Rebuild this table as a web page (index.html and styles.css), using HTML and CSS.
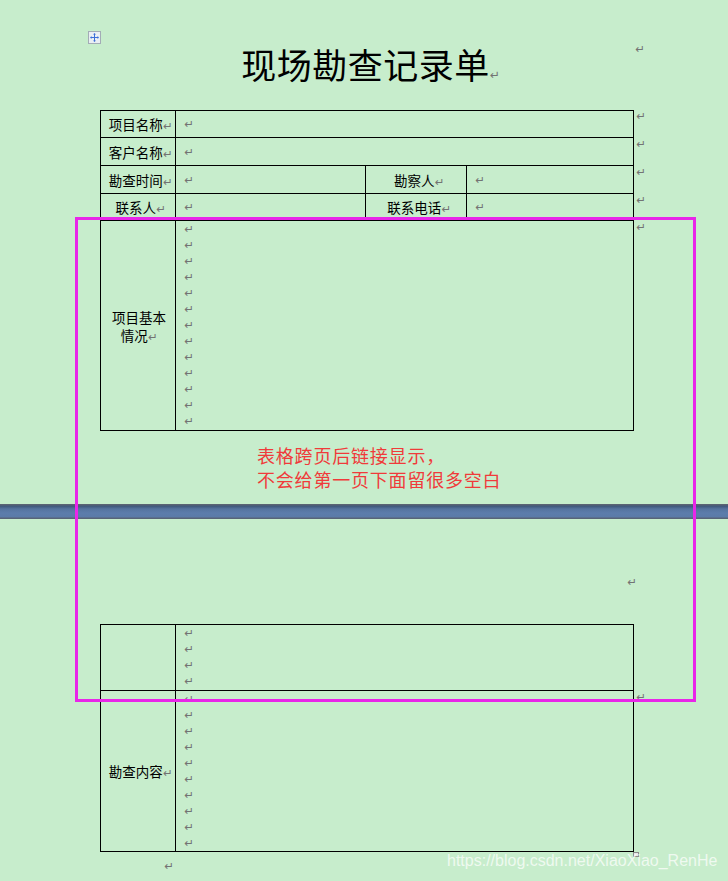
FILE: index.html
```html
<!DOCTYPE html>
<html lang="zh-CN">
<head>
<meta charset="utf-8">
<title>现场勘查记录单</title>
<link rel="stylesheet" href="styles.css">
</head>
<body>
<div class="doc">
  <section class="page page-1">
    <span class="move-handle">
      <svg width="13" height="13" viewBox="0 0 13 13">
        <rect x="0.5" y="0.5" width="12" height="12" fill="#e9eef3" stroke="#a3acb6"/>
        <path d="M6.5 3v7M3 6.5h7" stroke="#3a6fd8" stroke-width="1"/>
        <path d="M6.5 2l-1.5 1.5h3zM6.5 11l-1.5-1.5h3zM2 6.5l1.5-1.5v3zM11 6.5l-1.5-1.5v3z" fill="#3a6fd8"/>
      </svg>
    </span>
    <div class="title-row">
      <h1 class="title">现场勘查记录单<span class="pm">↵</span></h1>
      <span class="pm end">↵</span>
    </div>
    <div class="grid grid-1">
      <div class="c lab top left"><span class="t">项目名称<span class="pm">↵</span></span></div>
      <div class="c val top span3"><span class="pm">↵</span></div>
      <div class="end-cell"><span class="pm">↵</span></div>

      <div class="c lab left"><span class="t">客户名称<span class="pm">↵</span></span></div>
      <div class="c val span3"><span class="pm">↵</span></div>
      <div class="end-cell"><span class="pm">↵</span></div>

      <div class="c lab left"><span class="t">勘查时间<span class="pm">↵</span></span></div>
      <div class="c val"><span class="pm">↵</span></div>
      <div class="c lab lab2"><span class="t">勘察人<span class="pm">↵</span></span></div>
      <div class="c val"><span class="pm">↵</span></div>
      <div class="end-cell"><span class="pm">↵</span></div>

      <div class="c lab left"><span class="t">联系人<span class="pm">↵</span></span></div>
      <div class="c val"><span class="pm">↵</span></div>
      <div class="c lab lab2"><span class="t">联系电话<span class="pm">↵</span></span></div>
      <div class="c val"><span class="pm">↵</span></div>
      <div class="end-cell"><span class="pm">↵</span></div>

      <div class="c lab left multi"><span class="t"><span class="ln">项目基本</span><span class="ln">情况<span class="pm">↵</span></span></span></div>
      <div class="c lines span3">
        <span class="pm">↵</span><span class="pm">↵</span><span class="pm">↵</span><span class="pm">↵</span><span class="pm">↵</span><span class="pm">↵</span><span class="pm">↵</span><span class="pm">↵</span><span class="pm">↵</span><span class="pm">↵</span><span class="pm">↵</span><span class="pm">↵</span><span class="pm">↵</span>
      </div>
      <div class="end-cell"><span class="pm">↵</span></div>
    </div>
  </section>

  <div class="page-break"></div>

  <section class="page page-2">
    <div class="header-mark"><span class="pm">↵</span></div>
    <div class="table-wrap">
      <div class="grid grid-2">
        <div class="c lab top left"></div>
        <div class="c lines top">
          <span class="pm">↵</span><span class="pm">↵</span><span class="pm">↵</span><span class="pm">↵</span>
        </div>
        <div class="end-cell"></div>

        <div class="c lab left"><span class="t">勘查内容<span class="pm">↵</span></span></div>
        <div class="c lines">
          <span class="pm">↵</span><span class="pm">↵</span><span class="pm">↵</span><span class="pm">↵</span><span class="pm">↵</span><span class="pm">↵</span><span class="pm">↵</span><span class="pm">↵</span><span class="pm">↵</span><span class="pm">↵</span>
        </div>
        <div class="end-cell"><span class="pm">↵</span></div>
      </div>
      <span class="table-end"></span>
    </div>
    <div class="after-mark"><span class="pm">↵</span></div>
  </section>

  <div class="annotation-box"></div>
  <p class="annotation-text">表格跨页后链接显示，<br>不会给第一页下面留很多空白</p>
  <div class="watermark">https://blog.csdn.net/XiaoXiao_RenHe</div>
</div>
</body>
</html>
```

FILE: styles.css
```css
* {
  box-sizing: border-box;
}

html, body {
  margin: 0;
  padding: 0;
}

body {
  background: #c7edcc;
  font-family: "Noto Sans CJK SC", "Liberation Sans", sans-serif;
  color: #000;
  width: 728px;
  height: 881px;
  overflow: hidden;
}

.doc {
  position: relative;
  width: 728px;
  height: 881px;
}

.page-1 {
  position: relative;
  height: 504px;
  padding-top: 46px;
}

.move-handle {
  position: absolute;
  left: 88px;
  top: 31px;
  width: 13px;
  height: 13px;
  display: block;
}

.move-handle svg {
  display: block;
}

.pm {
  font-family: "DejaVu Sans", sans-serif;
  font-size: 11.5px;
  line-height: 0;
  color: #737373;
  font-weight: normal;
  letter-spacing: 0;
}

.title-row {
  margin-left: 100px;
  display: grid;
  grid-template-columns: 533px 12px;
  height: 35px;
}

.title {
  margin: 0;
  height: 35px;
  font-size: 35px;
  line-height: 35px;
  font-weight: normal;
  text-align: center;
  padding-left: 8px;
  letter-spacing: 0.5px;
}

.title .pm {
  font-size: 12px;
}

.title-row .end {
  align-self: start;
  display: block;
  height: 6px;
  line-height: 6px;
  padding-left: 2px;
}

.grid {
  display: grid;
  margin-left: 100px;
}

.grid-1 {
  margin-top: 29px;
  grid-template-columns: 76px 190px 101px 167px 12px;
  grid-template-rows: 28px 28px 28px 27px 210px;
}

.c {
  border-right: 1px solid #000;
  border-bottom: 1px solid #000;
  font-size: 13.5px;
  line-height: 18px;
}

.c.top {
  border-top: 1px solid #000;
}

.c.left {
  border-left: 1px solid #000;
}

.span3 {
  grid-column: span 3;
}

.lab {
  display: flex;
  align-items: center;
  justify-content: center;
  text-align: center;
  padding-left: 5px;
}

.lab2 {
  padding-left: 6px;
}

.lab.multi {
  padding-left: 2px;
}

.lab .t {
  display: block;
}

.lab .ln {
  display: block;
  height: 18px;
  line-height: 18px;
}

.val {
  display: flex;
  align-items: center;
  padding-left: 8px;
}

.lines {
  display: flex;
  flex-direction: column;
  padding-left: 8px;
}

.lines .pm {
  display: block;
  height: 16px;
  line-height: 16px;
}

.end-cell {
  padding-left: 2px;
}

.end-cell .pm {
  display: block;
  line-height: 12px;
}

.page-break {
  height: 15px;
  background: linear-gradient(#5a6474 0, #5a6474 1px, #3f5679 2px, #55739f 5px, #5c7cab 9px, #5b7aa8 13px, #586478 14px, #586478 15px);
}

.page-2 {
  position: relative;
}

.header-mark {
  margin-top: 54px;
  height: 12px;
  line-height: 12px;
  padding-left: 627px;
}

.header-mark .pm,
.after-mark .pm {
  line-height: 12px;
}

.table-wrap {
  position: relative;
  margin-top: 39px;
}

.grid-2 {
  grid-template-columns: 76px 458px 12px;
  grid-template-rows: 67px 161px;
}

.table-end {
  position: absolute;
  left: 633px;
  top: 228px;
  width: 6px;
  height: 5px;
  border: 1px solid #8a8a8a;
  background: #e8e8e8;
}

.after-mark {
  margin-top: 5px;
  padding-left: 164px;
  line-height: 12px;
}

.annotation-box {
  position: absolute;
  left: 75px;
  top: 217px;
  width: 621px;
  height: 485px;
  border: 3px solid #e826e8;
}

.annotation-text {
  position: absolute;
  left: 257px;
  top: 443px;
  margin: 0;
  font-size: 18px;
  line-height: 24px;
  letter-spacing: 0.8px;
  color: #f03a3a;
}

.watermark {
  position: absolute;
  left: 447px;
  top: 853px;
  font-family: "Liberation Sans", Arial, sans-serif;
  font-size: 16px;
  line-height: 16px;
  color: rgba(255, 255, 255, 0.72);
  white-space: nowrap;
}
```
